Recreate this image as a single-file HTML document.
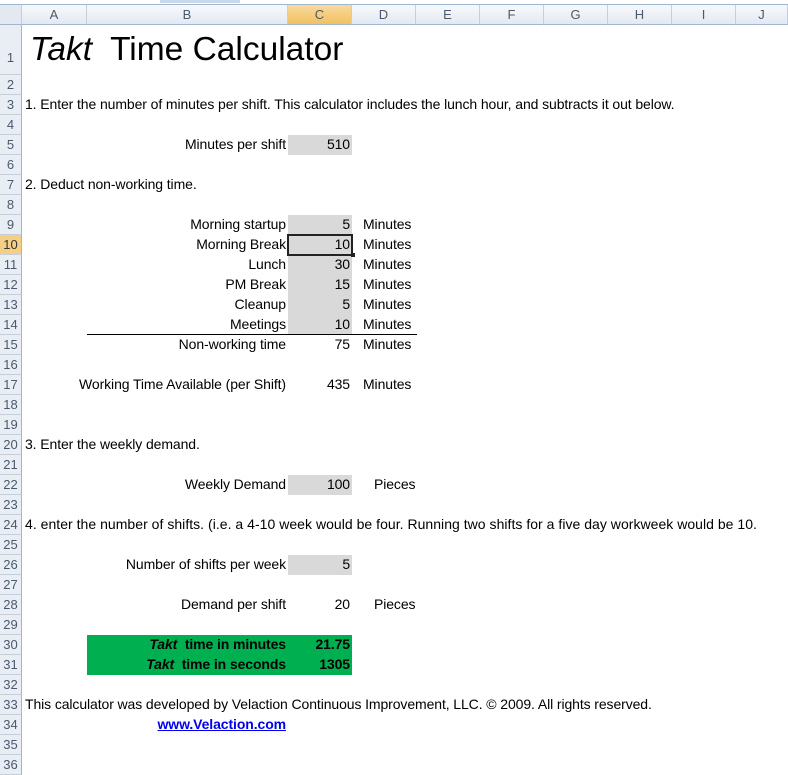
<!DOCTYPE html>
<html><head><style>
body{margin:0;width:788px;height:763px;overflow:hidden;background:#fff;font-family:"Liberation Sans",sans-serif;position:relative}
.hd{position:absolute;top:5px;height:20px;background:linear-gradient(#f7f9fc,#e4e9f1);border-right:1px solid #c6ced9;border-bottom:1px solid #9eb6ce;color:#4a5a6e;font-size:13px;text-align:center;line-height:20px;box-sizing:border-box}
.rn{position:absolute;left:0;width:22px;background:#e9eef5;border-bottom:1px solid #c6ced9;border-right:1px solid #9eb6ce;color:#4a5a6e;font-size:13px;text-align:center;box-sizing:border-box}
.t{position:absolute;font-size:14px;line-height:19px;white-space:nowrap;color:#000;letter-spacing:-0.1px}
.r{text-align:right}
.g{position:absolute;background:#d9d9d9;left:288px;width:64px;height:20px}
</style></head><body>
<div style="position:absolute;left:0;top:0;width:788px;height:5px;background:#fff;border-bottom:1px solid #9eb6ce;box-sizing:border-box"></div>
<div style="position:absolute;left:160px;top:0;width:80px;height:3px;background:#c9d8ea"></div>
<div class="hd" style="left:0;width:22px;background:#e4e9f1"></div>
<div class="hd" style="left:22px;width:65px">A</div>
<div class="hd" style="left:87px;width:201px">B</div>
<div class="hd" style="left:288px;width:64px;background:linear-gradient(#f9d99f,#f1c15f)">C</div>
<div class="hd" style="left:352px;width:64px">D</div>
<div class="hd" style="left:416px;width:64px">E</div>
<div class="hd" style="left:480px;width:64px">F</div>
<div class="hd" style="left:544px;width:64px">G</div>
<div class="hd" style="left:608px;width:64px">H</div>
<div class="hd" style="left:672px;width:64px">I</div>
<div class="hd" style="left:736px;width:52px">J</div>
<div class="rn" style="top:25px;height:50px;line-height:66px">1</div>
<div id="rows"></div>
<script>
var hh='';for(var n=2;n<=36;n++){var yy=75+(n-2)*20;hh+='<div class="rn" style="top:'+yy+'px;height:20px;line-height:20px;'+(n==10?'background:#f6cf86;color:#333':'')+'">'+n+'</div>';}
document.getElementById('rows').outerHTML=hh;
</script>
<div class="g" style="top:135px"></div>
<div class="g" style="top:215px;height:120px"></div>
<div class="g" style="top:475px"></div>
<div class="g" style="top:555px"></div>
<div style="position:absolute;left:87px;top:635px;width:265px;height:40px;background:#00b050"></div>
<div style="position:absolute;left:287px;top:234px;width:66px;height:22px;border:2px solid #222;box-sizing:border-box"></div>
<div style="position:absolute;left:351px;top:253px;width:4px;height:4px;background:#222"></div>
<div style="position:absolute;left:87px;top:334px;width:330px;height:1px;background:#000"></div>
<div class="t" style="left:30px;top:28px;font-size:33.5px;line-height:44px;letter-spacing:0">
<i>Takt</i>&nbsp; Time Calculator</div>
<div class="t" style="left:25px;top:95px">1. Enter the number of minutes per shift. This calculator includes the lunch hour, and subtracts it out below.</div>
<div class="t r" style="right:502px;top:135px">Minutes per shift</div><div class="t r" style="right:438px;top:135px">510</div>
<div class="t" style="left:25px;top:175px">2. Deduct non-working time.</div>
<div id="blk"></div>
<script>
var d=[[9,'Morning startup','5','Minutes'],[10,'Morning Break','10','Minutes'],[11,'Lunch','30','Minutes'],[12,'PM Break','15','Minutes'],[13,'Cleanup','5','Minutes'],[14,'Meetings','10','Minutes'],[15,'Non-working time','75','Minutes'],[17,'Working Time Available (per Shift)','435','Minutes'],[22,'Weekly Demand','100','Pieces'],[26,'Number of shifts per week','5',''],[28,'Demand per shift','20','Pieces']];
var s='';d.forEach(function(r){var yy=75+(r[0]-2)*20;var dl=r[3]=='Pieces'?374:363;
s+='<div class="t r" style="right:502px;top:'+yy+'px">'+r[1]+'</div><div class="t r" style="right:438px;top:'+yy+'px">'+r[2]+'</div><div class="t" style="left:'+dl+'px;top:'+yy+'px">'+r[3]+'</div>';});
document.getElementById('blk').outerHTML=s;
</script>
<div class="t" style="left:25px;top:435px">3. Enter the weekly demand.</div>
<div class="t" style="left:25px;top:515px;letter-spacing:0.03px">4. enter the number of shifts. (i.e. a 4-10 week would be four. Running two shifts for a five day workweek would be 10.</div>
<div class="t r" style="right:502px;top:635px;font-weight:bold"><i>Takt</i>&nbsp; time in minutes</div><div class="t r" style="right:438px;top:635px;font-weight:bold">21.75</div>
<div class="t r" style="right:502px;top:655px;font-weight:bold"><i>Takt</i>&nbsp; time in seconds</div><div class="t r" style="right:438px;top:655px;font-weight:bold">1305</div>
<div class="t" style="left:25px;top:695px">This calculator was developed by Velaction Continuous Improvement, LLC. © 2009. All rights reserved.</div>
<div class="t r" style="right:502px;top:715px;font-weight:bold;color:#0000ee;text-decoration:underline">www.Velaction.com</div>
</body></html>
